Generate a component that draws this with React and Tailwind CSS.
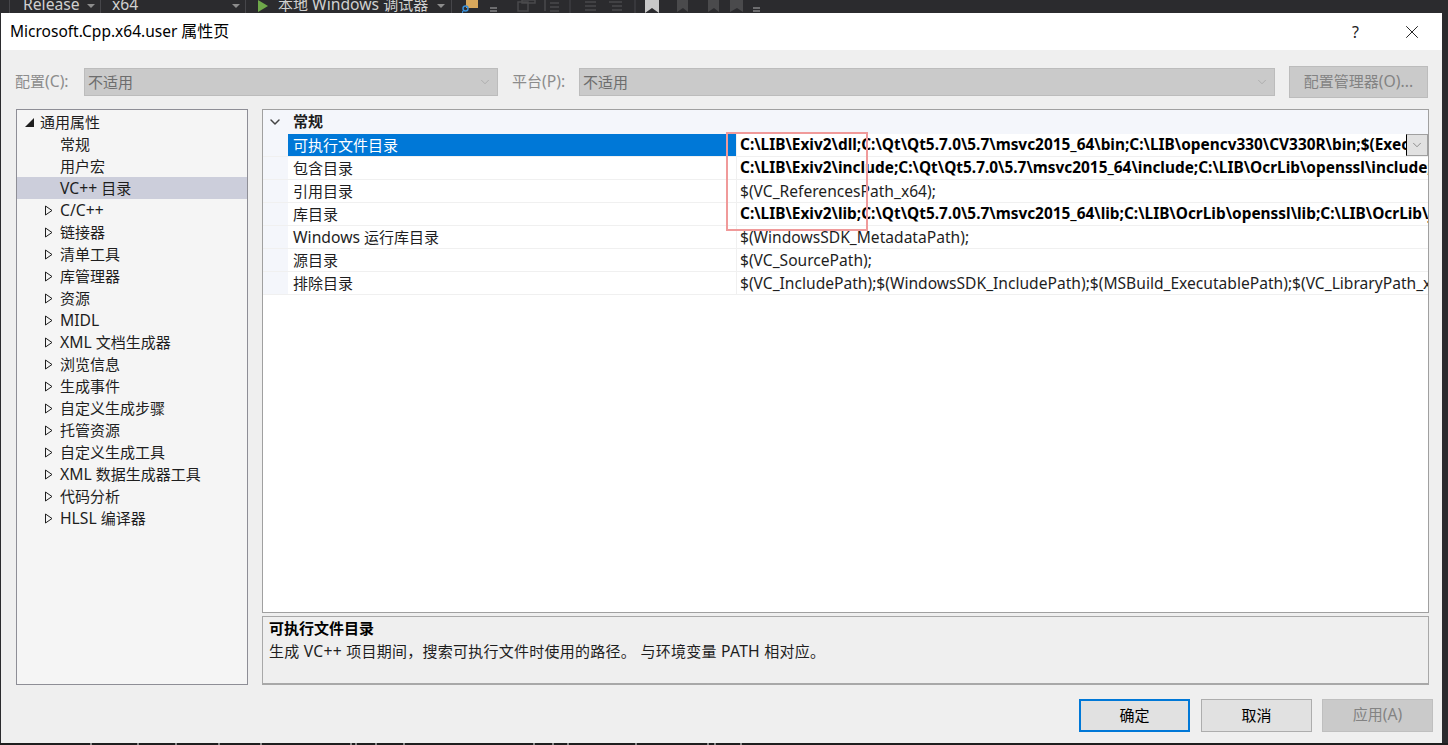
import { ChevronDown, X } from 'lucide-react';

const FONT = 'font-["Noto_Sans","Noto_Sans_CJK_SC",sans-serif]';

const TREE = [
    { label: '通用属性', arrow: 'open' },
    { label: '常规' },
    { label: '用户宏' },
    { label: 'VC++ 目录', selected: true },
    { label: 'C/C++', arrow: 'closed' },
    { label: '链接器', arrow: 'closed' },
    { label: '清单工具', arrow: 'closed' },
    { label: '库管理器', arrow: 'closed' },
    { label: '资源', arrow: 'closed' },
    { label: 'MIDL', arrow: 'closed' },
    { label: 'XML 文档生成器', arrow: 'closed' },
    { label: '浏览信息', arrow: 'closed' },
    { label: '生成事件', arrow: 'closed' },
    { label: '自定义生成步骤', arrow: 'closed' },
    { label: '托管资源', arrow: 'closed' },
    { label: '自定义生成工具', arrow: 'closed' },
    { label: 'XML 数据生成器工具', arrow: 'closed' },
    { label: '代码分析', arrow: 'closed' },
    { label: 'HLSL 编译器', arrow: 'closed' },
];

const PROPS = [
    { name: '可执行文件目录', value: 'C:\\LIB\\Exiv2\\dll;C:\\Qt\\Qt5.7.0\\5.7\\msvc2015_64\\bin;C:\\LIB\\opencv330\\CV330R\\bin;$(ExecutablePath)', bold: true, selected: true },
    { name: '包含目录', value: 'C:\\LIB\\Exiv2\\include;C:\\Qt\\Qt5.7.0\\5.7\\msvc2015_64\\include;C:\\LIB\\OcrLib\\openssl\\include;$(IncludePath)', bold: true },
    { name: '引用目录', value: '$(VC_ReferencesPath_x64);' },
    { name: '库目录', value: 'C:\\LIB\\Exiv2\\lib;C:\\Qt\\Qt5.7.0\\5.7\\msvc2015_64\\lib;C:\\LIB\\OcrLib\\openssl\\lib;C:\\LIB\\OcrLib\\jsoncpp\\lib', bold: true },
    { name: 'Windows 运行库目录', value: '$(WindowsSDK_MetadataPath);' },
    { name: '源目录', value: '$(VC_SourcePath);' },
    { name: '排除目录', value: '$(VC_IncludePath);$(WindowsSDK_IncludePath);$(MSBuild_ExecutablePath);$(VC_LibraryPath_x64);' },
];

const SPECKS = [90, 137, 175, 218, 260, 350, 355, 375, 403, 533, 552, 567, 635, 707, 714, 740];

// latin runs are set a little larger than the CJK ones, the original font is wider
function Mixed({ text }) {
    return text.split(/([\x20-\x7e]+)/).map((part, i) => (
        /[\x20-\x7e]/.test(part) ? <span key={i} className="text-[15.7px]">{part}</span> : part
    ));
}

function TreeRow({ item }) {
    return (
        <div className={`flex h-[22px] items-center text-[15px] leading-[20px] text-[#1e1e1e] ${item.selected ? 'bg-[#cccedb]' : ''} ${item.arrow ? '' : 'pl-[43px]'}`}>
            {item.arrow === 'open' && (
                <svg width="9" height="9" viewBox="0 0 9 9" className="ml-[8px] mr-[6px] shrink-0"><path d="M9 0v9H0z" fill="#1e1e1e" /></svg>
            )}
            {item.arrow === 'closed' && (
                <svg width="8" height="11" viewBox="0 0 8 11" className="ml-[28px] mr-[7px] shrink-0"><path d="M.5 1v9l6.5-4.5z" fill="none" stroke="#1e1e1e" /></svg>
            )}
            <span className="whitespace-nowrap"><Mixed text={item.label} /></span>
        </div>
    );
}

function PropRow({ row }) {
    return (
        <div className="flex h-[23px] border-b border-[#f0f0f0] text-[15px] leading-[20px]">
            <div className="w-[25px] shrink-0 bg-[#f4f6fb]" />
            <div className={`flex w-[448px] shrink-0 items-center pl-[5px] ${row.selected ? 'bg-[#0078d7] text-white' : 'text-[#1e1e1e]'}`}>
                <span><Mixed text={row.name} /></span>
            </div>
            <div className={`flex min-w-0 flex-1 items-center overflow-hidden whitespace-nowrap border-l border-[#f0f0f0] pl-[3px] ${row.bold ? 'text-[15.4px] font-bold text-black' : 'text-[15.6px] text-[#1e1e1e]'}`}>
                {row.value}
            </div>
            {row.selected && (
                <div className="flex w-[22px] shrink-0 items-center justify-center border border-[#a0a0a0] border-l-black bg-[#e1e1e1]">
                    <ChevronDown size={14} strokeWidth={1} color="#555" />
                </div>
            )}
        </div>
    );
}

function Select({ className }) {
    return (
        <div className={`flex h-[28px] items-center justify-between border border-[#bcbcbc] bg-[#cacaca] pl-[3px] pr-[5px] text-[15px] text-[#6d6d6d] ${className}`}>
            <span>不适用</span>
            <ChevronDown size={14} strokeWidth={1} color="#9a9a9a" />
        </div>
    );
}

function Sep({ className }) {
    return <span className={`h-[13px] w-[1px] shrink-0 bg-[#46464a] ${className}`} />;
}

function DropArrow({ className }) {
    return (
        <svg width="8" height="13" viewBox="0 0 8 13" className={`shrink-0 ${className}`}><path d="M0 4h8L4 8z" fill="#8c8c8c" /></svg>
    );
}

export default function App() {
    return (
        <div className={`relative flex h-[745px] w-[1448px] flex-col overflow-hidden bg-[#2b2b2e] ${FONT}`}>
            {/* toolbar behind the dialog */}
            <div className="flex h-[13px] shrink-0 items-start overflow-hidden text-[15px] leading-[13px] text-[#d0d0d0]">
                <Sep className="ml-[9px]" />
                <span className="-mt-[2px] ml-[13px] w-[64px] shrink-0 text-[15.7px]">Release</span>
                <DropArrow />
                <Sep className="ml-[5px]" />
                <span className="-mt-[2px] ml-[11px] w-[120px] shrink-0 text-[15.7px]">x64</span>
                <DropArrow />
                <Sep className="ml-[5px]" />
                <svg width="10" height="13" viewBox="0 0 10 13" className="ml-[12px] shrink-0"><path d="M0 0l10 6-10 6z" fill="#6fa84a" /></svg>
                <span className="-mt-[2px] ml-[10px] w-[151px] shrink-0 whitespace-nowrap"><Mixed text="本地 Windows 调试器" /></span>
                <DropArrow className="ml-[8px]" />
                <Sep className="ml-[6px]" />
                <svg width="306" height="13" viewBox="0 0 306 13" className="ml-[10px] shrink-0">
                    <path d="M4 0h12v8H4z" fill="#d8a85c" />
                    <circle cx="3.5" cy="8.5" r="2.5" fill="none" stroke="#3a90d8" strokeWidth="1.5" />
                    <path d="M1 11l-1 2" stroke="#3a90d8" strokeWidth="1.5" />
                    <path d="M28 8h7M28 11h7" stroke="#b0b0b0" />
                    <path d="M56 2h10v9H56zM60 0h13v3H60z" fill="none" stroke="#4a4a4c" strokeWidth="1.5" />
                    <path d="M83 0v11M88 3h9M88 7h9M88 11h9" stroke="#4a4a4c" strokeWidth="1.5" />
                    <path d="M108 0v13" stroke="#46464a" />
                    <path d="M123 2h11M123 6h11M123 10h11" stroke="#4a4a4c" strokeWidth="1.5" />
                    <path d="M147 2h13M150 6h10M150 10h10" stroke="#4a4a4c" strokeWidth="1.5" />
                    <path d="M173 0v13" stroke="#46464a" />
                    <path d="M183 0h14v13l-7-5-7 5z" fill="#c8c8c8" />
                    <path d="M215 0h11v12l-5-4-6 4zM246 0h11v12l-5-4-6 4zM268 0h13v12l-6-4-7 4z" fill="#4a4a4c" />
                    <path d="M291 8h7M291 11h7" stroke="#b0b0b0" />
                </svg>
            </div>

            <div className="ml-px flex h-[730px] w-[1441px] shrink-0 flex-col bg-[#efefef]">
                {/* title bar */}
                <div className="flex h-[37px] shrink-0 items-center bg-white pl-[9px] text-[16px] text-black">
                    <span className="flex-1">
                        <span className="text-[15.5px]">Microsoft.Cpp.x64.user </span>属性页
                    </span>
                    <span className="-ml-[2px] mr-[2px] w-[16px] text-[16px] text-[#222]">?</span>
                    <X size={22} strokeWidth={1} color="#111" className="ml-[31px] mr-[19px]" />
                </div>

                {/* config row */}
                <div className="mt-[16px] flex h-[32px] shrink-0 items-center pl-[14px] text-[15px] text-[#8c8c8c]">
                    <span className="w-[69px]"><Mixed text="配置(C):" /></span>
                    <Select className="w-[414px]" />
                    <span className="ml-[14px] w-[67px]"><Mixed text="平台(P):" /></span>
                    <Select className="w-[696px]" />
                    <div className="ml-[14px] flex h-[32px] w-[139px] items-center justify-center border border-[#bcbcbc] bg-[#cacaca] text-[#838383]"><span><Mixed text="配置管理器(O)..." /></span></div>
                </div>

                {/* main area */}
                <div className="mt-[11px] flex h-[576px] shrink-0 pl-[15px]">
                    <div className="w-[232px] shrink-0 border border-[#8e8e96] bg-[#f5f5f5] pt-[1px]">
                        {TREE.map((item) => <TreeRow key={item.label} item={item} />)}
                    </div>
                    <div className="ml-[14px] flex w-[1167px] shrink-0 flex-col">
                        <div className="h-[504px] shrink-0 border border-[#a0a0a0] bg-white">
                            <div className="flex h-[24px] items-center bg-[#f4f6fb] pb-[2px] text-[15px] font-bold text-[#1e1e1e]">
                                <ChevronDown size={16} strokeWidth={2.2} color="#444" className="ml-[4px] mr-[10px] mt-[2px]" />
                                <span>常规</span>
                            </div>
                            {PROPS.map((row) => <PropRow key={row.name} row={row} />)}
                        </div>
                        <div className="mt-[3px] h-[69px] shrink-0 border border-b-2 border-[#a8a8a8] pl-[6px] text-[15px] text-[#1e1e1e]">
                            <div className="font-bold leading-[22px] text-black">可执行文件目录</div>
                            <div className="mt-[1px] leading-[22px] tracking-[0.25px]"><Mixed text="生成 VC++ 项目期间，搜索可执行文件时使用的路径。 与环境变量 PATH 相对应。" /></div>
                        </div>
                    </div>
                </div>

                {/* footer buttons */}
                <div className="mt-[14px] flex shrink-0 justify-end pr-[9px] text-[15px]">
                    <div className="flex h-[33px] w-[111px] items-center justify-center border-2 border-[#0078d7] bg-[#e1e1e1] pb-[1px] text-black">确定</div>
                    <div className="ml-[11px] flex h-[33px] w-[111px] items-center justify-center border border-[#adadad] bg-[#e1e1e1] pb-[1px] text-black">取消</div>
                    <div className="ml-[10px] flex h-[33px] w-[111px] items-center justify-center border border-[#bfbfbf] bg-[#cacaca] pb-[1px] text-[#838383]"><span><Mixed text="应用(A)" /></span></div>
                </div>
            </div>

            {/* bits of the editor text showing under the dialog */}
            <svg width="1448" height="2" viewBox="0 0 1448 2" className="shrink-0 bg-[#1e1e1e]">
                {SPECKS.map((x) => <rect key={x} x={x} y="0" width="2" height="2" fill="#8a8a8a" />)}
            </svg>

            {/* annotation drawn over the property grid */}
            <div className="pointer-events-none absolute left-[726px] top-[132px] h-[99px] w-[142px] border-2 border-[#f09a9a]" />
        </div>
    );
}
